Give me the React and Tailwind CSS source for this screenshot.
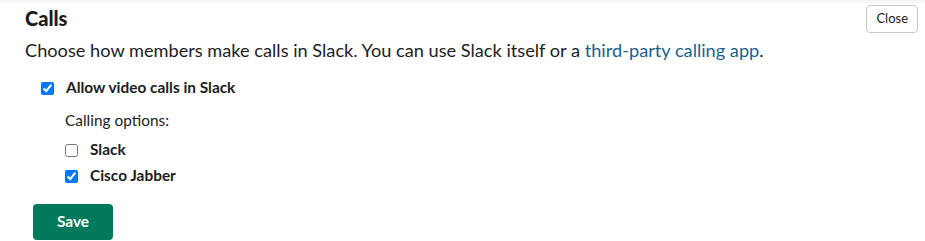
import { useState } from 'react';

function Option({ label, checked, onChange, bold = true }) {
  return (
    <label className="flex items-center gap-[12px] h-[26px]">
      <input type="checkbox" checked={checked} onChange={onChange} className="w-[13px] h-[13px] m-0" />
      <span className={`text-[15.4px] text-[#1d1c1d] ${bold ? 'font-bold' : ''}`}>{label}</span>
    </label>
  );
}

export default function App() {
  const [video, setVideo] = useState(true);
  const [slack, setSlack] = useState(false);
  const [jabber, setJabber] = useState(true);

  return (
    <div className="bg-white min-h-screen font-['Lato','Noto_Sans',sans-serif] text-[#1d1c1d]">
      <div className="h-[3px] bg-[#f7f7f7]" />
      <div className="flex justify-between items-start pl-[25px] pr-[7px]">
        <h2 className="text-[20px] font-black leading-[26px] mt-[2px]">Calls</h2>
        <button className="mt-[2px] h-[28px] px-[9px] text-[13px] border border-[#c8c8c8] rounded-[4px] bg-white">
          Close
        </button>
      </div>
      <p className="pl-[25px] text-[18.2px] leading-[26px] mt-[4px]">
        Choose how members make calls in Slack. You can use Slack itself or a{' '}
        <a href="#" className="text-[#1a5f92]">third-party calling app</a>.
      </p>

      <div className="pl-[41px] mt-[12px]">
        <Option label="Allow video calls in Slack" checked={video} onChange={() => setVideo(!video)} />
        <div className="pl-[24px]">
          <div className="text-[15.4px] text-[#1d1c1d] h-[24px] leading-[24px] mt-[7px] mb-[5px]">Calling options:</div>
          <Option label="Slack" checked={slack} onChange={() => setSlack(!slack)} />
          <Option label="Cisco Jabber" checked={jabber} onChange={() => setJabber(!jabber)} />
        </div>
      </div>

      <div className="pl-[33px] mt-[15px]">
        <button className="h-[36px] w-[80px] rounded-[4px] bg-[#007a5a] text-white text-[15.4px] font-bold">
          Save
        </button>
      </div>
    </div>
  );
}
